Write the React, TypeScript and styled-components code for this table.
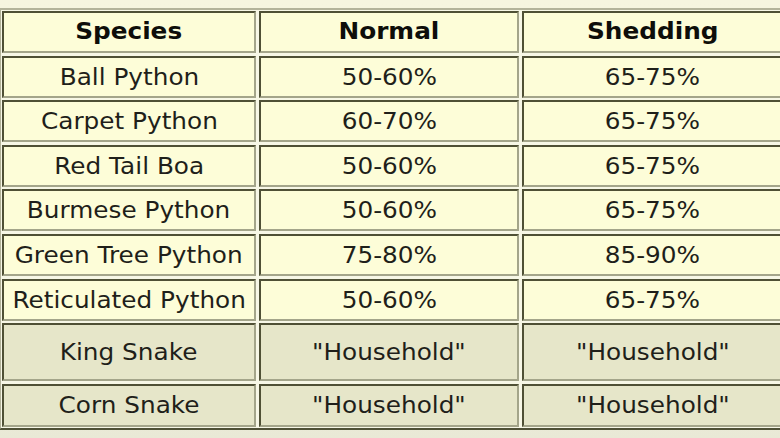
import styled, { createGlobalStyle } from "styled-components";

const GlobalStyle = createGlobalStyle`
  html, body {
    margin: 0;
    padding: 0;
    background: #f4f3dc;
    overflow: hidden;
  }
  body {
    width: 780px;
    height: 438px;
  }
`;

const Page = styled.div`
  width: 780px;
  height: 438px;
  overflow: hidden;
  background: linear-gradient(180deg, #f6f5df 0%, #f3f2dc 70%, #e9e9d6 100%);
`;

const Table = styled.div`
  display: grid;
  grid-template-columns: 254px 260px 261px;
  grid-template-rows: repeat(7, 42px) 58px 43px;
  gap: 2.6px 3px;
  width: max-content;
  margin: 8px 0 0 -1px;
  padding: 1px;
  border: 2px solid;
  border-color: #b3b39a #4f5036 #4f5036 #b3b39a;
  background: #f7f7e6;
`;

const Cell = styled.div<{ $head?: boolean; $muted?: boolean }>`
  display: flex;
  align-items: center;
  justify-content: center;
  box-sizing: border-box;
  border: 2px solid;
  border-color: #4f5035 #a4a58a #a4a58a #4f5035;
  background: ${(p) => (p.$muted ? "#e6e6c9" : "#fdfdd8")};
  font-family: "DejaVu Sans", Verdana, sans-serif;
  font-size: 22.5px;
  font-weight: ${(p) => (p.$head ? 700 : 400)};
  color: ${(p) => (p.$head ? "#0e0e0a" : "#1f1f1a")};
  white-space: nowrap;
  padding-bottom: ${(p) => (p.$head ? "2px" : "0")};

  > span {
    display: inline-block;
    transform: scaleX(1.1);
  }
`;

const header = ["Species", "Normal", "Shedding"];

const rows: { name: string; normal: string; shed: string; muted?: boolean }[] = [
  { name: "Ball Python", normal: "50-60%", shed: "65-75%" },
  { name: "Carpet Python", normal: "60-70%", shed: "65-75%" },
  { name: "Red Tail Boa", normal: "50-60%", shed: "65-75%" },
  { name: "Burmese Python", normal: "50-60%", shed: "65-75%" },
  { name: "Green Tree Python", normal: "75-80%", shed: "85-90%" },
  { name: "Reticulated Python", normal: "50-60%", shed: "65-75%" },
  { name: "King Snake", normal: '"Household"', shed: '"Household"', muted: true },
  { name: "Corn Snake", normal: '"Household"', shed: '"Household"', muted: true },
];

export default function App() {
  return (
    <>
      <GlobalStyle />
      <Page>
        <Table>
          {header.map((h) => (
            <Cell key={h} $head>
              <span>{h}</span>
            </Cell>
          ))}
          {rows.map((r) => [
            <Cell key={r.name + "-n"} $muted={r.muted}>
              <span>{r.name}</span>
            </Cell>,
            <Cell key={r.name + "-a"} $muted={r.muted}>
              <span>{r.normal}</span>
            </Cell>,
            <Cell key={r.name + "-b"} $muted={r.muted}>
              <span>{r.shed}</span>
            </Cell>,
          ])}
        </Table>
      </Page>
    </>
  );
}
